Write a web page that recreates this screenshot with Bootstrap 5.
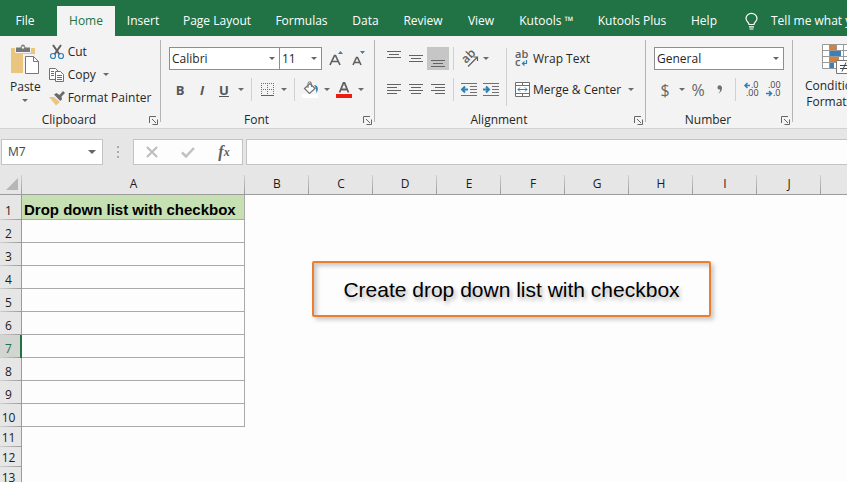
<!DOCTYPE html>
<html lang="en">
<head>
<meta charset="utf-8">
<meta name="viewport" content="width=device-width, initial-scale=1">
<title>Drop down list with checkbox</title>
<link href="https://cdn.jsdelivr.net/npm/bootstrap@5.3.0/dist/css/bootstrap.min.css" rel="stylesheet">
<style>
  :root { --green: #217346; --ribbon: #f3f3f3; --chrome: #e6e6e6; --ink: #262626; }
  body { font: 12px/16px "Open Sans", "Noto Sans", sans-serif; color: var(--ink); background: #fff; }
  button, select, input { font: inherit; color: inherit; }
  svg { display: block; flex: none; overflow: visible; }

  .tabstrip { display: grid; grid-template-columns: 50px 7px 58px 56px 92px 77px 51px 64px 52px 79px 92px 52px 1fr; height: 36px; padding-top: 6px; background: var(--green); overflow: hidden; }
  .tabstrip a { color: #fff; text-decoration: none; line-height: 30px; text-align: center; }
  .tabstrip a.active { background: var(--ribbon); color: var(--green); }
  .tabstrip .tell { padding-left: 15px; gap: 13px; }

  .ribbon { height: 93px; background: var(--ribbon); border-bottom: 1px solid #d2d2d2; padding: 3px 0; }
  .group { border-right: 1px solid #b4b4b4; margin: 1px 0 3px; flex: none; }
  .tools { height: 74px; }
  .caption { height: 12px; line-height: 12px; }
  .caption span { flex: 1; text-align: center; }
  .g-clip { width: 161px; }
  .g-font { width: 214px; }
  .g-align { width: 271px; }
  .g-num { width: 147px; }
  .g-style { border: 0; width: 88px; }
  .ctl { border: 0; background: none; padding: 0; display: flex; align-items: center; justify-content: center; height: 23px; min-width: 22px; }
  .ctl.on { background: #c6c6c6; }
  .drop { border: 0; background: none; padding: 0; width: 12px; height: 23px; display: flex; align-items: center; justify-content: center; }
  .drop::after, .tri::after { content: ""; border: 3px solid transparent; border-top-color: #6a6a6a; border-bottom: 0; }
  .paste { padding: 4px 0 0 2px; margin: 0 8px; }
  .rule { width: 1px; background: #d0d0d0; margin: 0 4px; align-self: stretch; flex: none; }
  .labelled { gap: 3px; white-space: nowrap; justify-content: flex-start; }
  .two-rows { gap: 8px; padding-top: 7px; }
  .pick { appearance: none; border: 1px solid #8e8e8e; border-radius: 0; height: 23px; padding: 0 2px; background: #fff url("data:image/svg+xml,%3Csvg xmlns='http://www.w3.org/2000/svg' width='6' height='3'%3E%3Cpath d='M0 0h6L3 3z' fill='%23666'/%3E%3C/svg%3E") no-repeat right 4px center; }
  .pick.name { height: 26px; width: 102px; padding-left: 6px; border-color: #c3c3c3; background-size: 8px 4px; background-position: right 6px center; color: #444; }
  .w-face { width: 111px; }
  .w-size { width: 43px; margin-left: -1px; }
  .glyph { font-size: 13px; font-weight: 700; color: #555; }
  .money { font-size: 16px; color: #666; }

  .formula { background: var(--chrome); padding: 10px 0 9px 1px; }
  .dots { margin: 0 14px; }
  .fxbox { border: 1px solid #c3c3c3; background: #fdfdfd; width: 110px; height: 26px; }
  .fxbox button { width: 36px; }
  .fx-input { border: 1px solid #c3c3c3; border-right: 0; background: #fdfdfd; height: 26px; border-radius: 0; min-width: 0; margin-left: 3px; }
  .fxglyph { font: italic 700 16px/20px "Liberation Serif", serif; color: #606060; }
  .fxglyph small { font-size: 12px; }

  .sheet { background: #fdfdfd; }
  .cells { table-layout: fixed; width: 1077px; border-collapse: separate; border-spacing: 0; }
  .cells .c-row { width: 22px; }
  .cells .c-a { width: 223px; }
  .cells th, .cells td { padding: 0; font-weight: 400; text-align: center; }
  .cells thead th { height: 21px; line-height: 20px; border-bottom: 1px solid #9b9b9b; color: #1c1c1c;
    background: linear-gradient(#cfcfcf, #9b9b9b) no-repeat right bottom / 1px 19px var(--chrome); }
  .cells tbody th { height: 23px; border-right: 1px solid #9b9b9b; color: #1c1c1c; vertical-align: bottom; padding: 0 4px 0 0; line-height: 18px;
    background: linear-gradient(90deg, #cfcfcf, #9b9b9b) no-repeat left bottom / 100% 1px var(--chrome); }
  .cells tbody .first th { height: 25px; }
  .cells tbody .slim th { height: 20px; }
  .cells tbody .cur th { background-color: #d2d5d2; color: var(--green); border-right: 2px solid var(--green); padding-right: 3px; }
  .cells .boxed { border-right: 1px solid #aba8a8; border-bottom: 1px solid #aba8a8; }
  .cells td.title { background: #c6e0b4; color: #000; font: bold 15px/19px "Liberation Sans", Arial, sans-serif; text-align: left; vertical-align: bottom; padding-left: 2px; white-space: nowrap; }
  .callout { position: absolute; left: 312px; top: 87px; width: 399px; height: 56px; border: 2px solid #ed7d31; border-radius: 2px;
    font: 21px/54px "Liberation Sans", Arial, sans-serif; color: #000; text-align: center; white-space: nowrap;
    box-shadow: 3px 3px 4px #0003, inset 3px 3px 4px #0003; text-shadow: 2px 3px 4px #0005; }
</style>
</head>
<body class="overflow-hidden">
<svg class="d-none" aria-hidden="true">
  <symbol id="launch" viewBox="0 0 9 9"><path d="M.5 7V.5H7M3 3l4 4M8.500 3.500v5h-5" fill="none" stroke="#666"/></symbol>
</svg>

<nav class="tabstrip" aria-label="Ribbon tabs">
  <a href="#">File</a><span></span>
  <a href="#" class="active" aria-current="page">Home</a>
  <a href="#">Insert</a>
  <a href="#">Page Layout</a>
  <a href="#">Formulas</a>
  <a href="#">Data</a>
  <a href="#">Review</a>
  <a href="#">View</a>
  <a href="#">Kutools ™</a>
  <a href="#">Kutools Plus</a>
  <a href="#">Help</a>
  <a href="#" class="tell d-flex align-items-center text-nowrap">
    <svg width="13" height="17" viewBox="0 0 13 17" fill="none" stroke="#fff" stroke-width="1.200"><path d="M4 11.500C4 9 1 8.500 1 5.500a5.300 4.900 0 0 1 11 0C12 8.500 9 9 9 11.500zM4 13.800h5M4.500 16h4"/></svg>
    Tell me what you want to do</a>
</nav>

<div class="ribbon d-flex overflow-hidden">
  <section class="group g-clip" aria-label="Clipboard">
    <div class="tools d-flex">
      <button class="ctl paste h-100 flex-column justify-content-start tri" type="button">
        <svg width="30" height="31" viewBox="0 0 30 31"><path d="M1 4h24v25H1z" fill="#eac57f"/><path d="M5.500 3h5a2.500 3 0 0 1 5 0h5v5.500h-15z" fill="#777" stroke="#f3f3f3"/><circle cx="13" cy="3.500" r="1.200" fill="#f3f3f3"/><path d="M14.500 11.500h9l5 5v13h-14z" fill="#fff" stroke="#f3f3f3" stroke-width="3"/><path d="M15.500 12.500h8l5 5v12h-13zM23.500 12.500v5h5" fill="#fff" stroke="#777"/></svg>
        <span class="my-1">Paste</span>
      </button>
      <div>
        <button class="ctl labelled" type="button"><svg width="16" height="16" viewBox="0 0 16 16" fill="none"><path d="M4 1l6.500 9.500M12 1L5.500 10.500" stroke="#606060" stroke-width="2"/><circle cx="4" cy="12" r="2.500" stroke="#3080b5" stroke-width="1.200"/><circle cx="12" cy="12" r="2.500" stroke="#3080b5" stroke-width="1.200"/></svg>Cut</button>
        <div class="d-flex">
          <button class="ctl labelled" type="button"><svg width="16" height="16" viewBox="0 0 16 16"><path d="M.5 1.500h6l3 3v8h-9z" fill="#fff" stroke="#707070"/><path d="M2 4.500h3M2 6.500h3M2 8.500h3" stroke="#3080b5"/><path d="M6.500 4.500h5l3 3v7h-8z" fill="#fff" stroke="#707070"/><path d="M8 8.500h5M8 10.500h5M8 12.500h5" stroke="#3080b5"/></svg>Copy</button>
          <button class="drop ms-1" type="button" aria-label="Copy options"></button>
        </div>
        <button class="ctl labelled" type="button"><svg width="16" height="16" viewBox="0 0 16 16"><path d="M0 7l5 0 6 5-4 3.500z" fill="#eac57f"/><path d="M5 4.500l2.500-1.500 3 2L14 1l2 2-3.500 3.500.5 3L11 11z" fill="#6b6b6b"/><path d="M5 6l6 5.500" stroke="#f3f3f3"/></svg>Format Painter</button>
      </div>
    </div>
    <div class="caption d-flex"><span>Clipboard</span><button class="ctl h-100" type="button" aria-label="Clipboard settings"><svg width="9" height="9" class="ms-2"><use href="#launch"/></svg></button></div>
  </section>

  <section class="group g-font" aria-label="Font">
    <div class="tools two-rows d-flex flex-column ps-2">
      <div class="d-flex">
        <select class="pick w-face" aria-label="Font name"><option>Calibri</option></select>
        <select class="pick w-size" aria-label="Font size"><option>11</option></select>
        <button class="ctl ms-1" type="button" aria-label="Increase font size"><svg width="14" height="16" viewBox="0 0 14 16"><path d="M0 14L4.500 4.500h1L10 14M2 10.500h6.500" fill="none" stroke="#606060" stroke-width="1.700"/><path d="M8 3h5l-2.500-3z" fill="#3080b5"/></svg></button>
        <button class="ctl" type="button" aria-label="Decrease font size"><svg width="14" height="16" viewBox="0 0 14 16"><path d="M1 14l3.500-7.500h1L9 14M2.500 11.500h5.500" fill="none" stroke="#606060" stroke-width="1.600"/><path d="M8 0h5l-2.500 3z" fill="#3080b5"/></svg></button>
      </div>
      <div class="d-flex">
        <button class="ctl glyph" type="button">B</button>
        <button class="ctl glyph fst-italic" type="button">I</button>
        <button class="ctl glyph text-decoration-underline" type="button">U</button>
        <button class="drop" type="button" aria-label="Underline options"></button>
        <i class="rule"></i>
        <button class="ctl" type="button" aria-label="Borders"><svg width="13" height="13" viewBox="0 0 13 13"><path d="M0 .5h13M0 6.500h13M.5 0v12M6.500 0v12M12.500 0v12" stroke="#707070" stroke-dasharray="1 1"/><path d="M0 12.500h13" stroke="#606060"/></svg></button>
        <button class="drop" type="button" aria-label="Border options"></button>
        <i class="rule"></i>
        <button class="ctl" type="button" aria-label="Fill colour"><svg width="17" height="17" viewBox="0 0 17 17"><path d="M2.500 7.500L8 2.500l5 5-5.500 5z" fill="#fff" stroke="#707070" stroke-width="1.200"/><path d="M6 7V2.500a1.700 1.700 0 0 1 3.400 0V6" fill="none" stroke="#707070"/><path d="M12 4c4 0 5 4 2.500 8C14 8 14 7 12 4z" fill="#3080b5"/><path d="M0 13h16v4H0z" fill="#fff"/></svg></button>
        <button class="drop" type="button" aria-label="Fill colour options"></button>
        <button class="ctl" type="button" aria-label="Font colour"><svg width="16" height="16" viewBox="0 0 16 16"><path d="M3.500 10.500L7.500 1h1l4 9.500M5 7.500h6" fill="none" stroke="#606060" stroke-width="1.800"/><path d="M0 12h16v4H0z" fill="#ed1c0c"/></svg></button>
        <button class="drop" type="button" aria-label="Font colour options"></button>
      </div>
    </div>
    <div class="caption d-flex"><span>Font</span><button class="ctl h-100" type="button" aria-label="Font settings"><svg width="9" height="9" class="ms-2"><use href="#launch"/></svg></button></div>
  </section>

  <section class="group g-align" aria-label="Alignment">
    <div class="tools d-flex ps-2">
      <div class="two-rows d-flex flex-column">
        <div class="d-flex">
          <button class="ctl" type="button" aria-label="Top align"><svg width="14" height="16" viewBox="0 0 14 16"><path d="M0 .5h14M2 3.500h10M0 6.500h14" stroke="#636363"/></svg></button>
          <button class="ctl" type="button" aria-label="Middle align"><svg width="14" height="16" viewBox="0 0 14 16"><path d="M0 4.500h14M2 7.500h10M0 10.500h14" stroke="#636363"/></svg></button>
          <button class="ctl on" type="button" aria-label="Bottom align" aria-pressed="true"><svg width="14" height="16" viewBox="0 0 14 16"><path d="M0 9.500h14M2 12.500h10M0 15.500h14" stroke="#636363"/></svg></button>
          <i class="rule"></i>
          <button class="ctl" type="button" aria-label="Orientation"><svg width="16" height="16" viewBox="0 0 16 16"><text x="5" y="13" transform="rotate(-45 5 13)" font-size="12" font-weight="600" fill="#606060">ab</text><path d="M7 15.500L16 6.500M12.500 6H16.500V10" fill="none" stroke="#606060" stroke-width="1.200"/></svg></button>
          <button class="drop" type="button" aria-label="Orientation options"></button>
        </div>
        <div class="d-flex">
          <button class="ctl" type="button" aria-label="Align left"><svg width="14" height="11" viewBox="0 0 14 11"><path d="M0 .5h14M0 3.500h10M0 6.500h14M0 9.500h10" stroke="#636363"/></svg></button>
          <button class="ctl" type="button" aria-label="Center"><svg width="14" height="11" viewBox="0 0 14 11"><path d="M0 .5h14M2 3.500h10M0 6.500h14M2 9.500h10" stroke="#636363"/></svg></button>
          <button class="ctl" type="button" aria-label="Align right"><svg width="14" height="11" viewBox="0 0 14 11"><path d="M0 .5h14M4 3.500h10M0 6.500h14M4 9.500h10" stroke="#636363"/></svg></button>
          <i class="rule"></i>
          <button class="ctl" type="button" aria-label="Decrease indent"><svg width="16" height="13" viewBox="0 0 16 13"><path d="M0 .5h16M9 3.500h7M9 6.500h7M9 9.500h7M0 12.500h16" stroke="#707070"/><path d="M1 6.500h6M4 3.500l-3 3 3 3" fill="none" stroke="#3080b5" stroke-width="2"/></svg></button>
          <button class="ctl" type="button" aria-label="Increase indent"><svg width="16" height="13" viewBox="0 0 16 13"><path d="M0 .5h16M9 3.500h7M9 6.500h7M9 9.500h7M0 12.500h16" stroke="#707070"/><path d="M0 6.500h6M3 3.500l3 3-3 3" fill="none" stroke="#3080b5" stroke-width="2"/></svg></button>
        </div>
      </div>
      <i class="rule mt-2 mb-2"></i>
      <div class="two-rows d-flex flex-column ps-1">
        <button class="ctl labelled" type="button"><svg width="15" height="17" viewBox="0 0 15 17"><text x="0" y="8" font-size="11" font-weight="600" fill="#606060">ab</text><text x="0" y="16" font-size="11" font-weight="600" fill="#606060">c</text><path d="M11.500 10v3.500H8M9.500 11.500l-2 2 2 2" fill="none" stroke="#3080b5" stroke-width="1.200"/></svg>Wrap Text</button>
        <div class="d-flex">
          <button class="ctl labelled" type="button"><svg width="15" height="15" viewBox="0 0 15 15"><path d="M.5.5h14v14H.5zM.5 3.500h14M.5 11.500h14M7.500 0v3.500M7.500 11.500V15" fill="#fff" stroke="#707070"/><path d="M1 4h13v7H1z" fill="#fff"/><path d="M3 7.500h9M5 5.500l-2 2 2 2M10 5.500l2 2-2 2" fill="none" stroke="#3080b5"/></svg>Merge &amp; Center</button>
          <button class="drop ms-1" type="button" aria-label="Merge options"></button>
        </div>
      </div>
    </div>
    <div class="caption d-flex"><span>Alignment</span><button class="ctl h-100" type="button" aria-label="Alignment settings"><svg width="9" height="9" class="ms-2"><use href="#launch"/></svg></button></div>
  </section>

  <section class="group g-num" aria-label="Number">
    <div class="tools two-rows d-flex flex-column px-2">
      <select class="pick" aria-label="Number format"><option>General</option></select>
      <div class="d-flex">
        <button class="ctl money" type="button">$</button>
        <button class="drop" type="button" aria-label="Currency options"></button>
        <button class="ctl money" type="button">%</button>
        <button class="ctl" type="button" aria-label="Comma style"><svg width="6" height="10" viewBox="0 0 6 10"><path d="M1 8.500C3 7 3.500 5.500 3 4.500 1 5 .5 3.500.5 2.500c0-3 4.500-3 4.500.5 0 3-1.500 4.500-4 5.500z" fill="#707070"/></svg></button>
        <i class="rule"></i>
        <button class="ctl" type="button" aria-label="Increase decimal"><svg width="15" height="15" viewBox="0 0 15 15"><path d="M1 3.500h5M3.500 1L1 3.500 3.500 6" fill="none" stroke="#3080b5" stroke-width="1.500"/><text x="7" y="6" font-size="9" fill="#444">.0</text><text x="2" y="14" font-size="9" fill="#444">.00</text></svg></button>
        <button class="ctl" type="button" aria-label="Decrease decimal"><svg width="15" height="15" viewBox="0 0 15 15"><path d="M0 11.500h5M3 9l2.500 2.500L3 14" fill="none" stroke="#3080b5" stroke-width="1.500"/><text x="2" y="6" font-size="9" fill="#444">.00</text><text x="7" y="14" font-size="9" fill="#444">.0</text></svg></button>
      </div>
    </div>
    <div class="caption d-flex"><span>Number</span><button class="ctl h-100" type="button" aria-label="Number settings"><svg width="9" height="9" class="ms-2"><use href="#launch"/></svg></button></div>
  </section>

  <section class="group g-style" aria-label="Styles">
    <button class="ctl h-100 w-100 flex-column justify-content-start pt-1" type="button">
      <svg width="30" height="30" viewBox="0 0 30 30"><path d="M.5.500h28v24H.5z" fill="#fff"/><path d="M.5.500h28v24H.5zM7.500.500v24M14.500.500v24M21.500.500v24M.5 6.500h28M.5 12.500h28M.5 18.500h28" fill="none" stroke="#999"/><path d="M8 1h6v5H8zM8 13h9v5H8z" fill="#d6813a"/><path d="M8 7h11v5H8zM8 19h4v5H8z" fill="#3d80b8"/><path d="M14.500 16.500h15v13h-15z" fill="#fff" stroke="#777"/><path d="M18 21.500h8M18 24.500h8M24 18.500l-4 9" stroke="#444"/></svg>
      <span class="mt-1">Conditional<br>Formatting</span>
    </button>
  </section>
</div>

<div class="formula d-flex align-items-center">
  <select class="pick name" aria-label="Name box"><option>M7</option></select>
  <svg class="dots" width="2" height="12" viewBox="0 0 2 12" fill="#aaa"><path d="M0 0h2v2H0zM0 5h2v2H0zM0 10h2v2H0z"/></svg>
  <div class="fxbox d-flex align-items-center">
    <button class="ctl" type="button" aria-label="Cancel"><svg width="12" height="10" viewBox="0 0 12 10"><path d="M1 0l10 10M11 0L1 10" stroke="#bcbcbc" stroke-width="2"/></svg></button>
    <button class="ctl" type="button" aria-label="Enter"><svg width="14" height="11" viewBox="0 0 14 11"><path d="M1 5.500l4 4L13 1" fill="none" stroke="#c0c0c0" stroke-width="2.500"/></svg></button>
    <button class="ctl fxglyph" type="button" aria-label="Insert function">f<small>x</small></button>
  </div>
  <input class="fx-input flex-fill" type="text" aria-label="Formula bar">
</div>

<main class="sheet position-relative overflow-hidden">
  <table class="cells">
    <colgroup><col class="c-row"><col class="c-a"><col span="13"></colgroup>
    <thead>
      <tr><th><svg width="12" height="12" viewBox="0 0 12 12" class="ms-auto me-1"><path d="M12 0v12H0z" fill="#b4b7b4"/></svg></th><th>A</th><th>B</th><th>C</th><th>D</th><th>E</th><th>F</th><th>G</th><th>H</th><th>I</th><th>J</th><th>K</th><th>L</th><th>M</th><th>N</th></tr>
    </thead>
    <tbody>
      <tr class="first"><th>1</th><td class="boxed title">Drop down list with checkbox</td><td colspan="13"></td></tr>
      <tr><th>2</th><td class="boxed"></td><td colspan="13"></td></tr>
      <tr><th>3</th><td class="boxed"></td><td colspan="13"></td></tr>
      <tr><th>4</th><td class="boxed"></td><td colspan="13"></td></tr>
      <tr><th>5</th><td class="boxed"></td><td colspan="13"></td></tr>
      <tr><th>6</th><td class="boxed"></td><td colspan="13"></td></tr>
      <tr class="cur"><th>7</th><td class="boxed"></td><td colspan="13"></td></tr>
      <tr><th>8</th><td class="boxed"></td><td colspan="13"></td></tr>
      <tr><th>9</th><td class="boxed"></td><td colspan="13"></td></tr>
      <tr><th>10</th><td class="boxed"></td><td colspan="13"></td></tr>
      <tr class="slim"><th>11</th><td colspan="14"></td></tr>
      <tr class="slim"><th>12</th><td colspan="14"></td></tr>
      <tr class="slim"><th>13</th><td colspan="14"></td></tr>
    </tbody>
  </table>
  <div class="callout">Create drop down list with checkbox</div>
</main>
<script src="https://cdn.jsdelivr.net/npm/bootstrap@5.3.0/dist/js/bootstrap.bundle.min.js"></script>
</body>
</html>
